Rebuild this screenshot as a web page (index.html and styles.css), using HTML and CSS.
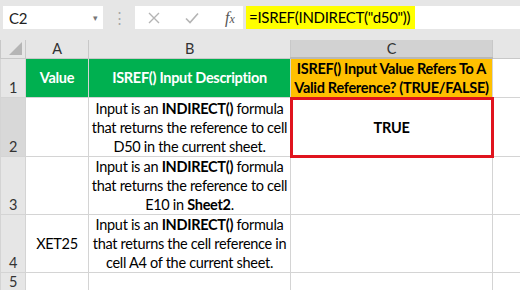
FILE: index.html
```html
<!DOCTYPE html>
<html lang="en">
<head>
    <meta charset="UTF-8">
    <meta name="viewport" content="width=device-width, initial-scale=1.0">
    <title>ISREF INDIRECT</title>
    <link rel="stylesheet" href="styles.css">
</head>
<body>
    <!-- Name box and formula bar -->
    <div class="toolbar">
        <div class="name-box">
            <span>C2</span>
            <span class="drop">&#9662;</span>
        </div>
        <div class="grip">&#8942;</div>
        <div class="formula-bar">
            <div class="fx-buttons">
                <svg class="btn-icon" width="16" height="16" viewBox="0 0 16 16">
                    <path d="M3 3 L13 13 M13 3 L3 13" stroke="#b4b4b4" stroke-width="1.4" fill="none"/>
                </svg>
                <svg class="btn-icon" width="16" height="16" viewBox="0 0 16 16">
                    <path d="M2 8.5 L6 12.5 L14 3.5" stroke="#b4b4b4" stroke-width="1.6" fill="none"/>
                </svg>
                <span class="fx">f<i>x</i></span>
            </div>
            <div class="formula-text">=ISREF(INDIRECT("d50"))</div>
        </div>
    </div>

    <table class="sheet">
        <colgroup>
            <col class="c-row">
            <col class="c-a">
            <col class="c-b">
            <col class="c-c">
            <col class="c-d">
        </colgroup>
        <tr class="col-head">
            <th class="corner"><span class="tri"></span></th>
            <th>A</th>
            <th>B</th>
            <th class="sel">C</th>
            <th></th>
        </tr>
        <tr class="r1">
            <th class="row-num">1</th>
            <td class="green">Value</td>
            <td class="green">ISREF() Input Description</td>
            <td class="yellow">ISREF() Input Value Refers To A<br>Valid Reference? (TRUE/FALSE)</td>
            <td class="blank"></td>
        </tr>
        <tr class="r2">
            <th class="row-num sel">2</th>
            <td class="data"></td>
            <td class="data">Input is an <b>INDIRECT()</b> formula<br>that returns the reference to cell<br>D50 in the current sheet.</td>
            <td class="data active"><b>TRUE</b></td>
            <td class="blank"></td>
        </tr>
        <tr class="r3">
            <th class="row-num">3</th>
            <td class="data"></td>
            <td class="data">Input is an <b>INDIRECT()</b> formula<br>that returns the reference to cell<br>E10 in <b>Sheet2</b>.</td>
            <td class="data"></td>
            <td class="blank"></td>
        </tr>
        <tr class="r4">
            <th class="row-num">4</th>
            <td class="data">XET25</td>
            <td class="data">Input is an <b>INDIRECT()</b> formula<br>that returns the cell reference in<br>cell A4 of the current sheet.</td>
            <td class="data"></td>
            <td class="blank"></td>
        </tr>
        <tr class="r5">
            <th class="row-num">5</th>
            <td class="blank"></td>
            <td class="blank"></td>
            <td class="blank"></td>
            <td class="blank"></td>
        </tr>
    </table>
</body>
</html>
```

FILE: styles.css
```css
body {
    margin: 0;
    background: #ffffff;
    font-family: Lato, "Open Sans", sans-serif;
    font-size: 14.5px;
    letter-spacing: -0.3px;
    color: #000;
    overflow: hidden;
}

/* top bar */
.toolbar {
    display: flex;
    align-items: flex-start;
    height: 40px;
    padding-top: 6px;
    box-sizing: border-box;
    background: #e6e6e6;
}
.name-box {
    display: flex;
    align-items: center;
    justify-content: space-between;
    width: 100px;
    height: 23px;
    margin-left: 3px;
    padding: 0 5px 0 6px;
    box-sizing: border-box;
    background: #fff;
    color: #222;
    font-size: 15px;
}
.name-box .drop {
    font-size: 9px;
    color: #777;
}
.grip {
    width: 32px;
    text-align: center;
    color: #a8a8a8;
    font-size: 15px;
    line-height: 23px;
}
.formula-bar {
    display: flex;
    flex: 1;
    height: 23px;
    background: #fff;
}
.fx-buttons {
    display: flex;
    align-items: center;
    width: 111px;
    padding-left: 11px;
    box-sizing: border-box;
    border-right: 3px solid #e6e6e6;
}
.btn-icon {
    margin-right: 22px;
}
.fx {
    font-family: "Liberation Serif", serif;
    font-style: italic;
    font-size: 16px;
    letter-spacing: 0;
    color: #555;
    margin-left: 3px;
}
.fx i {
    font-size: 12px;
}
.formula-text {
    background: #ffff00;
    padding: 0 3px;
    font-size: 15px;
    line-height: 23px;
    height: 23px;
    width: 169px;
    box-sizing: border-box;
    white-space: nowrap;
}

/* sheet grid */
.sheet {
    border-collapse: collapse;
    table-layout: fixed;
    width: 520px;
}
.c-row { width: 25px; }
.c-a { width: 63px; }
.c-b { width: 202px; }
.c-c { width: 202px; }
.c-d { width: 28px; }

.sheet td,
.sheet th {
    padding: 0;
    border: 1px solid #d4d4d4;
    overflow: hidden;
    white-space: nowrap;
}
.col-head th {
    height: 17px;
    background: #e6e6e6;
    border-color: #c8c8c8;
    border-top: none;
    font-weight: normal;
    color: #333;
    line-height: 16px;
}
.col-head th.sel {
    background: #d2d2d2;
    border-bottom: 2px solid #b8b8b8;
}
.corner {
    position: relative;
}
.corner .tri {
    position: absolute;
    right: 3px;
    bottom: 3px;
    border-left: 13px solid transparent;
    border-bottom: 13px solid #b5b5b5;
}
.row-num {
    background: #e6e6e6;
    border-color: #c8c8c8;
    border-left: none;
    font-weight: normal;
    color: #333;
    vertical-align: bottom;
    line-height: 18px;
}
.row-num.sel {
    background: #d8d8d8;
}

.r1 { height: 38px; }
.r2 { height: 59px; }
.r3 { height: 58px; }
.r4 { height: 57px; }
.r5 { height: 19px; }

.green,
.yellow,
.data {
    border-color: #5f5f5f;
    text-align: center;
    line-height: 19px;
}
.green {
    background: #00b050;
    color: #fff;
    font-weight: bold;
}
.yellow {
    background: #ffc000;
    font-weight: bold;
}
.active {
    outline: 3px solid #e0141e;
    outline-offset: -2px;
}
.blank {
    border-color: #dcdcdc;
}
```
